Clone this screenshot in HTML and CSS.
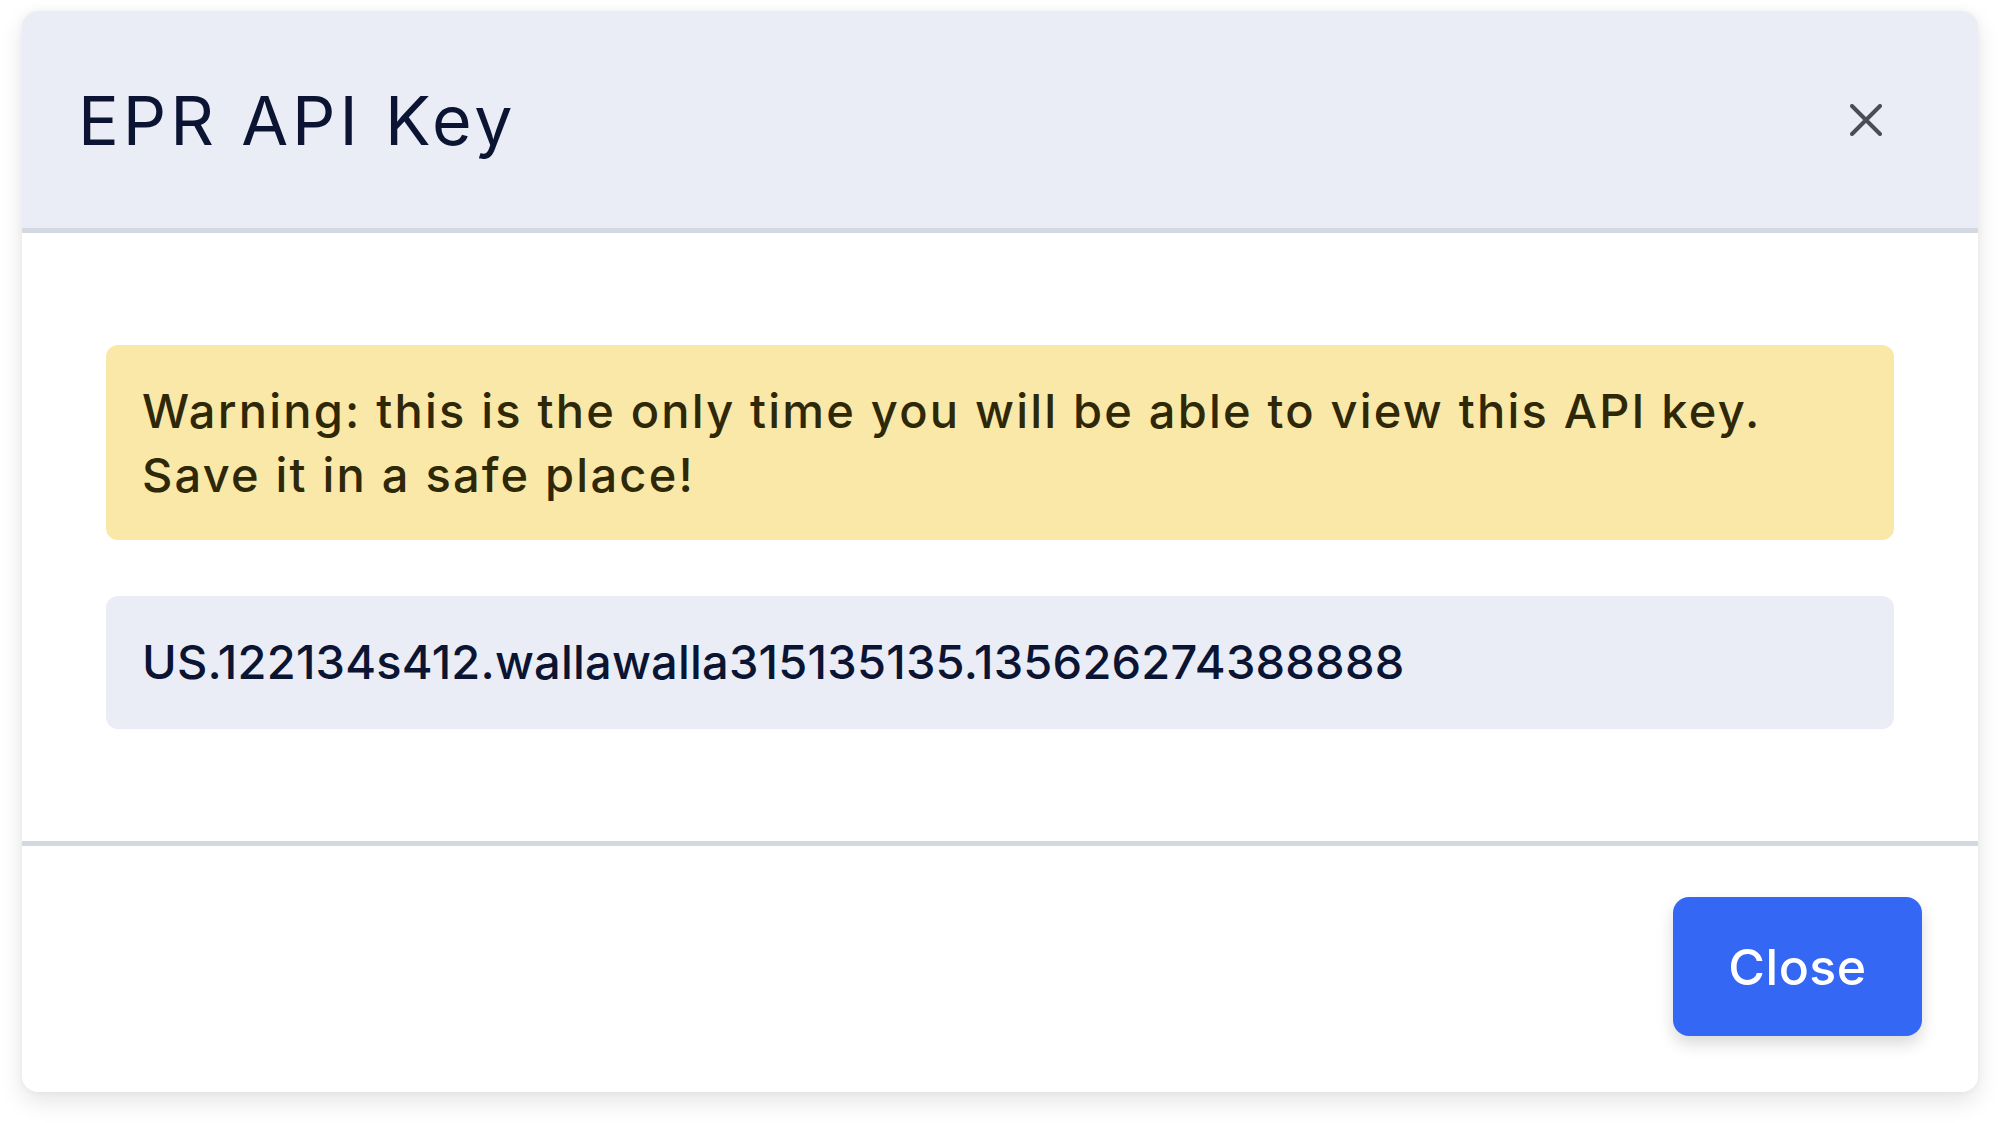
FILE: index.html
```html
<!DOCTYPE html>
<html>
<head>
<meta charset="utf-8">
<link rel="stylesheet" href="styles.css">
</head>
<body>
<div class="modal">
  <div class="modal-header">
    <h1 class="modal-title">EPR API Key</h1>
    <button class="icon-close" aria-label="Close">
      <svg width="32" height="32" viewBox="0 0 32 32"><path d="M2 2 L30 30 M30 2 L2 30" stroke="#4a4d55" stroke-width="4" stroke-linecap="round" fill="none"/></svg>
    </button>
  </div>
  <div class="modal-body">
    <div class="alert">Warning: this is the only time you will be able to view this API key.<br>Save it in a safe place!</div>
    <div class="key-box">US.122134s412.wallawalla315135135.135626274388888</div>
  </div>
  <div class="modal-footer">
    <button class="btn-primary">Close</button>
  </div>
</div>
</body>
</html>
```
FILE: styles.css
```css
html, body {
  margin: 0;
  padding: 0;
  background: #ffffff;
}
body {
  padding: 11px 21px 31px 22px;
  font-family: Inter, "Open Sans", sans-serif;
}
.modal {
  background: #ffffff;
  border-radius: 16px;
  box-shadow: 0 10px 24px rgba(0, 0, 0, 0.10), 0 0 8px rgba(0, 0, 0, 0.05);
  overflow: hidden;
  height: 1081px;
  display: flex;
  flex-direction: column;
}
.modal-header {
  background: #eaedf5;
  height: 217px;
  border-bottom: 5px solid #d3d8e1;
  display: flex;
  align-items: center;
  justify-content: space-between;
  padding: 0 96px 0 56px;
  box-sizing: content-box;
}
.modal-title {
  margin: 0;
  font-weight: 400;
  font-size: 68px;
  color: #0b1533;
  letter-spacing: 4px;
}
.icon-close {
  background: none;
  border: 0;
  padding: 0;
  width: 32px;
  height: 32px;
  display: flex;
}
.modal-body {
  padding: 112px 84px;
  display: flex;
  flex-direction: column;
  gap: 56px;
  border-bottom: 5px solid #d3d8e1;
}
.alert {
  background: #f9e8a7;
  border-radius: 12px;
  padding: 34px 36px 33px;
  font-size: 47px;
  font-weight: 500;
  line-height: 64px;
  letter-spacing: 2.2px;
  color: #2f2808;
}
.key-box {
  background: #eaedf5;
  border-radius: 12px;
  padding: 34px 36px 35px;
  font-size: 47px;
  font-weight: 500;
  line-height: 64px;
  letter-spacing: 0.2px;
  color: #0b1533;
}
.modal-footer {
  flex: 1;
  display: flex;
  align-items: center;
  justify-content: flex-end;
  padding: 0 56px 0 0;
}
.btn-primary {
  width: 249px;
  height: 139px;
  background: #3467f4;
  color: #ffffff;
  border: 0;
  border-radius: 16px;
  font-family: Inter, "Open Sans", sans-serif;
  font-size: 50px;
  font-weight: 500;
  letter-spacing: 0.5px;
  box-shadow: 0 8px 16px rgba(0, 0, 0, 0.15);
  margin-top: -5px;
}
```
